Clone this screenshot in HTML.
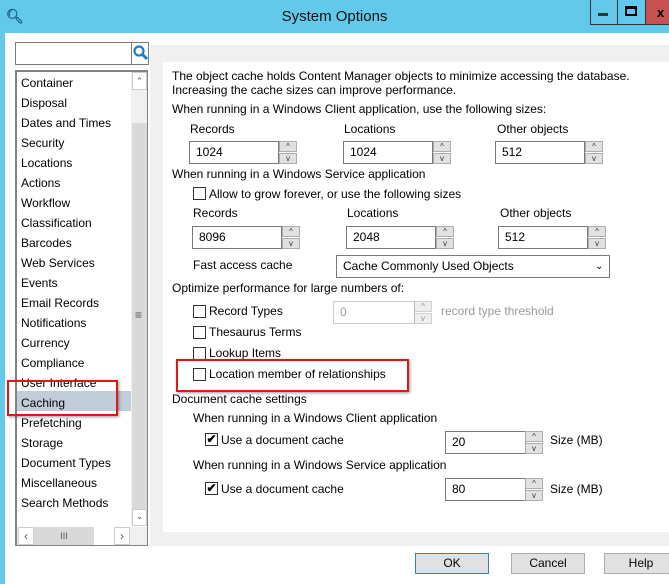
<!DOCTYPE html>
<html><head><style>
*{box-sizing:border-box;margin:0;padding:0}
body{width:669px;height:584px;position:relative;background:#fff;font-family:"Liberation Sans",sans-serif;font-size:12px;color:#000;overflow:hidden}
.a{position:absolute}
.t{position:absolute;line-height:16px;white-space:nowrap}
.box{position:absolute;border:1px solid #7a7a7a;background:#fff;height:23px;padding-left:6px;line-height:21px}
.sp{position:absolute;width:18px;height:23px}
.sp div{height:11px;border:1px solid #adadad;background:#e1e1e1;font-size:8px;line-height:9px;text-align:center;color:#333}
.sp div+div{margin-top:1px}
.cb{position:absolute;width:13px;height:13px;border:1px solid #333;background:#fff}
.ck{position:absolute;width:13px;height:13px;border:1px solid #333;background:#fff;font-size:12px;line-height:11px;text-align:center;font-weight:bold}
.btn{position:absolute;top:553px;width:74px;height:21px;border:1px solid #adadad;background:#e1e1e1;text-align:center;line-height:19px}
</style></head><body>
<div class="a" style="left:0;top:0;width:669px;height:33px;background:#62c9ea"></div>
<div class="a" style="left:0;top:33px;width:5px;height:551px;background:#62c9ea"></div>
<div class="t" style="left:6px;top:8px;font-size:14px;color:#1a5f8a;font-weight:bold">&#x1F50D;&#xFE0E;</div>
<div class="t" style="left:0;width:669px;text-align:center;top:7px;font-size:15px;line-height:19px;color:#111">System Options</div>
<div class="a" style="left:590px;top:0;width:80px;height:25px;border:1px solid #333;border-top:none;background:#62c9ea"></div>
<div class="a" style="left:617px;top:0;width:1px;height:25px;background:#333"></div>
<div class="a" style="left:645px;top:0;width:24px;height:25px;background:#c75050;border-left:1px solid #333;border-bottom:1px solid #333"></div>
<div class="a" style="left:598px;top:13px;width:10px;height:3px;background:#333"></div>
<div class="a" style="left:625px;top:6px;width:12px;height:10px;border:2px solid #000;border-top-width:3px"></div>
<div class="t" style="left:657px;top:5px;color:#000;font-weight:bold;font-size:13px">x</div>

<!-- search -->
<div class="a" style="left:15px;top:42px;width:117px;height:23px;border:1px solid #7a7a7a"></div>
<div class="a" style="left:131px;top:42px;width:18px;height:23px;border:1px solid #7a7a7a;border-left:none"></div>
<svg class="a" style="left:132px;top:44px" width="17" height="18"><circle cx="7" cy="7" r="4.5" stroke="#1e7bc4" stroke-width="2.2" fill="none"/><line x1="10" y1="10" x2="15" y2="15" stroke="#1e7bc4" stroke-width="3"/></svg>

<!-- list -->
<div class="a" style="left:15px;top:70px;width:133px;height:476px;border:1px solid #828282;border-left-width:2px;border-top-width:2px"></div>
<div class="a" style="left:131px;top:72px;width:16px;height:454px;background:#f0f0f0"></div>
<div class="a" style="left:132px;top:72px;width:15px;height:18px;background:#fff;border:1px solid #ccc;text-align:center;font-size:9px;color:#555;line-height:16px">&#8963;</div>
<div class="a" style="left:132px;top:123px;width:15px;height:386px;background:#d9d9d9"></div>
<div class="t" style="left:135px;top:307px;color:#555">&#8801;</div>
<div class="a" style="left:132px;top:509px;width:15px;height:17px;background:#fff;border:1px solid #ccc;text-align:center;font-size:9px;color:#555;line-height:12px">&#8964;</div>
<div class="a" style="left:17px;top:527px;width:130px;height:18px;background:#f0f0f0"></div>
<div class="a" style="left:18px;top:527px;width:16px;height:18px;background:#fff;border:1px solid #ccc;color:#555;text-align:center;line-height:16px">&lsaquo;</div>
<div class="a" style="left:34px;top:527px;width:60px;height:18px;background:#d9d9d9;text-align:center;line-height:18px;font-size:9px;color:#555">III</div>
<div class="a" style="left:94px;top:527px;width:20px;height:18px;background:#fff"></div>
<div class="a" style="left:114px;top:527px;width:16px;height:18px;background:#fff;border:1px solid #ccc;color:#555;text-align:center;line-height:16px">&rsaquo;</div>
<div class="a" style="left:17px;top:391px;width:114px;height:20px;background:#c1cdd9"></div>
<div class="t" style="left:21px;top:73px;line-height:20px">Container<br>Disposal<br>Dates and Times<br>Security<br>Locations<br>Actions<br>Workflow<br>Classification<br>Barcodes<br>Web Services<br>Events<br>Email Records<br>Notifications<br>Currency<br>Compliance<br>User Interface<br>Caching<br>Prefetching<br>Storage<br>Document Types<br>Miscellaneous<br>Search Methods</div>
<div class="a" style="left:7px;top:380px;width:111px;height:36px;border:2px solid #e0161b;box-shadow:1px 1px 3px rgba(0,0,0,.4)"></div>

<!-- right panel -->
<div class="a" style="left:150px;top:45px;width:519px;height:501px;background:#f0f0f0"></div>
<div class="a" style="left:163px;top:62px;width:506px;height:470px;background:#fff"></div>
<div class="t" style="left:172px;top:69px;line-height:14px">The object cache holds Content Manager objects to minimize accessing the database.<br>Increasing the cache sizes can improve performance.</div>
<div class="t" style="left:172px;top:101px">When running in a Windows Client application, use the following sizes:</div>
<div class="t" style="left:190px;top:121px">Records</div>
<div class="t" style="left:344px;top:121px">Locations</div>
<div class="t" style="left:497px;top:121px">Other objects</div>
<div class="box" style="left:189px;top:141px;width:90px">1024</div><div class="sp" style="left:279px;top:141px"><div>^</div><div>v</div></div>
<div class="box" style="left:343px;top:141px;width:90px">1024</div><div class="sp" style="left:433px;top:141px"><div>^</div><div>v</div></div>
<div class="box" style="left:495px;top:141px;width:90px">512</div><div class="sp" style="left:585px;top:141px"><div>^</div><div>v</div></div>
<div class="t" style="left:172px;top:166px">When running in a Windows Service application</div>
<div class="cb" style="left:193px;top:187px"></div>
<div class="t" style="left:209px;top:186px">Allow to grow forever, or use the following sizes</div>
<div class="t" style="left:193px;top:205px">Records</div>
<div class="t" style="left:347px;top:205px">Locations</div>
<div class="t" style="left:500px;top:205px">Other objects</div>
<div class="box" style="left:192px;top:226px;width:90px">8096</div><div class="sp" style="left:282px;top:226px"><div>^</div><div>v</div></div>
<div class="box" style="left:346px;top:226px;width:90px">2048</div><div class="sp" style="left:436px;top:226px"><div>^</div><div>v</div></div>
<div class="box" style="left:498px;top:226px;width:90px">512</div><div class="sp" style="left:588px;top:226px"><div>^</div><div>v</div></div>
<div class="t" style="left:193px;top:257px">Fast access cache</div>
<div class="box" style="left:336px;top:255px;width:274px">Cache Commonly Used Objects</div>
<div class="t" style="left:595px;top:259px;font-size:10px">&#8964;</div>
<div class="t" style="left:172px;top:280px">Optimize performance for large numbers of:</div>
<div class="cb" style="left:193px;top:305px"></div><div class="t" style="left:209px;top:303px">Record Types</div>
<div class="box" style="left:333px;top:301px;width:82px;border-color:#ccc;color:#999">0</div><div class="sp" style="left:414px;top:301px;opacity:.55"><div>^</div><div>v</div></div>
<div class="t" style="left:441px;top:303px;color:#999">record type threshold</div>
<div class="cb" style="left:193px;top:326px"></div><div class="t" style="left:209px;top:324px">Thesaurus Terms</div>
<div class="cb" style="left:193px;top:347px"></div><div class="t" style="left:209px;top:345px">Lookup Items</div>
<div class="cb" style="left:193px;top:368px"></div><div class="t" style="left:209px;top:366px">Location member of relationships</div>
<div class="a" style="left:176px;top:359px;width:233px;height:33px;border:2px solid #e0161b;box-shadow:1px 1px 3px rgba(0,0,0,.4)"></div>
<div class="t" style="left:172px;top:391px">Document cache settings</div>
<div class="t" style="left:193px;top:410px">When running in a Windows Client application</div>
<div class="ck" style="left:205px;top:433px">&#10004;</div><div class="t" style="left:221px;top:432px">Use a document cache</div>
<div class="box" style="left:445px;top:431px;width:81px">20</div><div class="sp" style="left:525px;top:431px"><div>^</div><div>v</div></div>
<div class="t" style="left:550px;top:432px">Size (MB)</div>
<div class="t" style="left:193px;top:457px">When running in a Windows Service application</div>
<div class="ck" style="left:205px;top:482px">&#10004;</div><div class="t" style="left:221px;top:481px">Use a document cache</div>
<div class="box" style="left:445px;top:478px;width:81px">80</div><div class="sp" style="left:525px;top:478px"><div>^</div><div>v</div></div>
<div class="t" style="left:550px;top:481px">Size (MB)</div>

<div class="btn" style="left:415px;border-color:#3c7fb1">OK</div>
<div class="btn" style="left:511px">Cancel</div>
<div class="btn" style="left:604px">Help</div>
</body></html>
